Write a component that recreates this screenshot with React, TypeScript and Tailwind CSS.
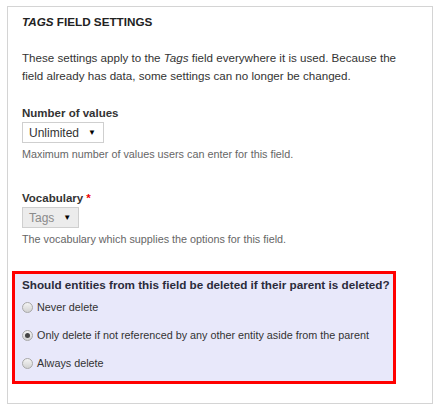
// Field settings form: Tags field, with the delete-behaviour question boxed in red
const OPTIONS = [
  { id: 'never', label: 'Never delete', checked: false },
  { id: 'orphan', label: 'Only delete if not referenced by any other entity aside from the parent', checked: true },
  { id: 'always', label: 'Always delete', checked: false },
];

function Radio({ checked }: { checked: boolean }) {
  return (
    <span className="w-[11px] h-[11px] rounded-full border border-[#a8a8a8] bg-gradient-to-b from-[#f4f4f4] to-[#d2d2d2] flex items-center justify-center shrink-0">
      {checked && <span className="w-[5px] h-[5px] rounded-full bg-[#444]" />}
    </span>
  );
}

function FakeSelect({ value, disabled }: { value: string; disabled?: boolean }) {
  return (
    <div
      className={`flex w-fit items-center h-[21px] pl-[6px] pr-[7px] gap-[9px] border border-[#cfcfcf] text-[12px] ${
        disabled ? 'bg-[#ececec] text-[#8a8a8a]' : 'bg-white text-[#333]'
      }`}
    >
      <span>{value}</span>
      <span className="text-[8px] text-black">▼</span>
    </div>
  );
}

export default function App() {
  return (
    <div className="bg-white w-[440px] h-[411px] pt-[6px] pl-[7px] font-['Liberation_Sans',Arial,sans-serif] text-[#333]">
      <div className="w-[426px] h-[398px] border border-[#d4d4d4] pt-[6px] pl-[4px]">
        <h2 className="ml-[10px] text-[11.7px] leading-[18px] font-bold uppercase text-[#222]">
          <em>Tags</em> field settings
        </h2>

        <p className="ml-[10px] mt-[18px] w-[390px] text-[11.6px] leading-[18px]">
          These settings apply to the <em>Tags</em> field everywhere it is used. Because the field already has data, some settings can no longer be changed.
        </p>

        <div className="ml-[10px] mt-[19px]">
          <p className="text-[11.5px] leading-[18px] font-bold">Number of values</p>
          <FakeSelect value="Unlimited" />
          <p className="mt-[4px] text-[10.8px] leading-[14px] text-[#666]">Maximum number of values users can enter for this field.</p>
        </div>

        <div className="ml-[10px] mt-[28px]">
          <p className="text-[11.5px] leading-[18px] font-bold">
            Vocabulary <span className="text-[#e00]">*</span>
          </p>
          <FakeSelect value="Tags" disabled />
          <p className="mt-[4px] text-[10.8px] leading-[14px] text-[#666]">The vocabulary which supplies the options for this field.</p>
        </div>

        <div className="mt-[25px] w-[384px] border-[3px] border-[#f00] bg-[#e8e8fa] pt-[3px] pb-[10px] pl-[7px]">
          <p className="text-[11.7px] leading-[16px] font-bold text-[#2b2b3b]">
            Should entities from this field be deleted if their parent is deleted?
          </p>
          <div className="mt-[6px] flex flex-col gap-[12px]">
            {OPTIONS.map((o) => (
              <label key={o.id} className="flex items-center gap-[4px] h-[16px] text-[10.8px] text-[#333]">
                <Radio checked={o.checked} />
                <span>{o.label}</span>
              </label>
            ))}
          </div>
        </div>
      </div>
    </div>
  );
}
